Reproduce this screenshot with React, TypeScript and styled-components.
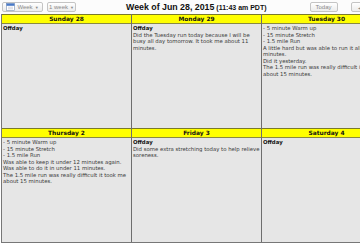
import React from "react";
import styled, { createGlobalStyle } from "styled-components";

const Global = createGlobalStyle`
  html, body { margin: 0; padding: 0; background: #fff; overflow: hidden; }
  body { width: 360px; height: 244px; }
  #root { width: 540px; }
`;

const Page = styled.div`
  width: 540px;
  font-family: "DejaVu Sans", Verdana, sans-serif;
`;

const Toolbar = styled.div`
  height: 14px;
  display: flex;
  align-items: center;
  background: #fcfcfc;
  padding-left: 2px;
`;

const Group = styled.div`
  display: flex;
  gap: 4px;
`;

const Btn = styled.div<{ $w: number }>`
  width: ${(p) => p.$w}px;
  height: 10px;
  box-sizing: border-box;
  border: 1px solid #c4c4c4;
  border-radius: 2px;
  background: linear-gradient(#ffffff, #ececec);
  display: flex;
  align-items: center;
  justify-content: center;
  gap: 2px;
  font-family: "Liberation Sans", Arial, sans-serif;
  font-size: 6px;
  color: #8a8a8a;
`;

const Caret = styled.span`
  font-size: 4px;
  color: #888;
`;

const Title = styled.div`
  margin-left: 50px;
  font-family: "Liberation Sans", Arial, sans-serif;
  font-weight: bold;
  font-size: 8.8px;
  color: #111;
  white-space: nowrap;
  display: flex;
  align-items: baseline;
  gap: 2px;
`;

const Small = styled.span`
  font-size: 7px;
`;

const Right = styled.div`
  margin-left: 43px;
  display: flex;
  gap: 13px;
`;

const Grid = styled.div`
  margin-left: 1px;
  display: grid;
  grid-template-columns: repeat(4, 130px);
  border-left: 1px solid #777;
  border-bottom: 1px solid #777;
  width: max-content;
`;

const Day = styled.div`
  border-right: 1px solid #6e6e6e;
  display: flex;
  flex-direction: column;
`;

const DayHead = styled.div`
  height: 8px;
  border-top: 1px solid #7a7a2a;
  border-bottom: 1px solid #8a8a40;
  background: #ffff00;
  font-weight: bold;
  font-size: 5.9px;
  line-height: 8px;
  text-align: center;
  color: #111;
`;

const Body = styled.div`
  height: 104px;
  box-sizing: border-box;
  background: #e6e6e6;
  padding: 1px 1px 0 1px;
  font-size: 5.35px;
  line-height: 6.5px;
  color: #3a3a3a;
  overflow: hidden;
`;

const Bold = styled.div`
  font-weight: bold;
  color: #111;
`;

const Line = styled.div``;

function CalIcon() {
  return (
    <svg width="9" height="8" viewBox="0 0 9 8">
      <rect x="0.5" y="0.5" width="8" height="7" fill="#fff" stroke="#7a8fb0" strokeWidth="0.6" />
      <rect x="0.5" y="0.5" width="8" height="2.3" fill="#4a7ac8" />
      <line x1="2" y1="4.2" x2="7" y2="4.2" stroke="#aab" strokeWidth="0.5" />
      <line x1="2" y1="5.8" x2="7" y2="5.8" stroke="#aab" strokeWidth="0.5" />
    </svg>
  );
}

type DayData = { title: string; offday?: boolean; lines: string[] };

const days: DayData[] = [
  { title: "Sunday 28", offday: true, lines: [] },
  {
    title: "Monday 29",
    offday: true,
    lines: ["Did the Tuesday run today because I will be busy all day tomorrow. It took me about 11 minutes."],
  },
  {
    title: "Tuesday 30",
    lines: [
      "- 5 minute Warm up",
      "- 15 minute Stretch",
      "- 1.5 mile Run",
      "A little hard but was able to run it all in ~12 minutes.",
      "Did it yesterday.",
      "The 1.5 mile run was really difficult it took me about 15 minutes.",
    ],
  },
  { title: "Wednesday 1", offday: true, lines: [] },
  {
    title: "Thursday 2",
    lines: [
      "- 5 minute Warm up",
      "- 15 minute Stretch",
      "- 1.5 mile Run",
      "Was able to keep it under 12 minutes again.",
      "Was able to do it in under 11 minutes.",
      "The 1.5 mile run was really difficult it took me about 15 minutes.",
    ],
  },
  {
    title: "Friday 3",
    offday: true,
    lines: ["Did some extra stretching today to help relieve soreness."],
  },
  { title: "Saturday 4", offday: true, lines: [] },
  { title: "", lines: [] },
];

export default function App() {
  return (
    <Page>
      <Global />
      <Toolbar>
        <Group>
          <Btn $w={41}>
            <CalIcon />
            Week <Caret>▼</Caret>
          </Btn>
          <Btn $w={29}>
            1 week <Caret>▼</Caret>
          </Btn>
        </Group>
        <Title>
          Week of Jun 28, 2015 <Small>(11:43 am PDT)</Small>
        </Title>
        <Right>
          <Btn $w={28}>Today</Btn>
          <Btn $w={20}>◀</Btn>
        </Right>
      </Toolbar>
      <Grid>
        {days.map((d, i) => (
          <Day key={i}>
            <DayHead>{d.title}</DayHead>
            <Body>
              {d.offday && <Bold>Offday</Bold>}
              {d.lines.map((l, j) => (
                <Line key={j}>{l}</Line>
              ))}
            </Body>
          </Day>
        ))}
      </Grid>
    </Page>
  );
}
